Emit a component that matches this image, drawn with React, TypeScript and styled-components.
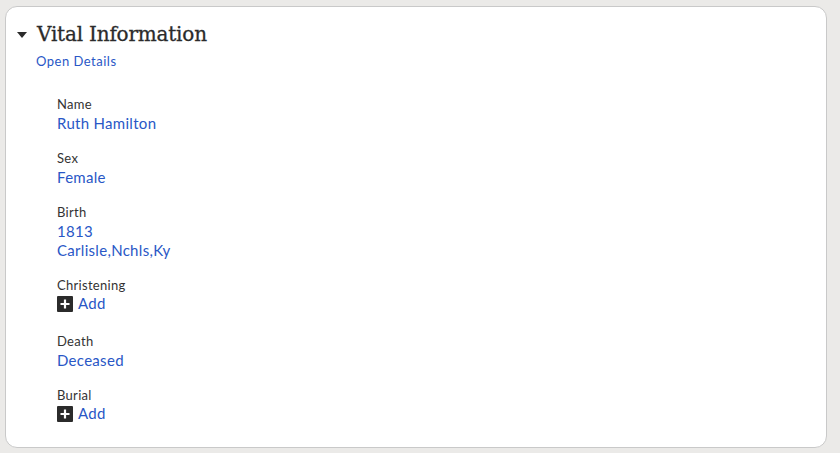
import React from "react";
import styled, { createGlobalStyle } from "styled-components";

const GlobalStyle = createGlobalStyle`
  html, body {
    margin: 0;
    padding: 0;
    background: #ebeae8;
  }
  body {
    font-family: Lato, "Liberation Sans", sans-serif;
  }
`;

type Field = {
  label: string;
  values?: string[];
  add?: boolean;
};

const fields: Field[] = [
  { label: "Name", values: ["Ruth Hamilton"] },
  { label: "Sex", values: ["Female"] },
  { label: "Birth", values: ["1813", "Carlisle,Nchls,Ky"] },
  { label: "Christening", add: true },
  { label: "Death", values: ["Deceased"] },
  { label: "Burial", add: true },
];

function PlusIcon() {
  return (
    <svg width="16" height="16" viewBox="0 0 16 16">
      <rect width="16" height="16" rx="1" fill="#2b2b2b" />
      <path d="M8 3.5v9M3.5 8h9" stroke="#fff" strokeWidth="2.2" />
    </svg>
  );
}

function App() {
  return (
    <Page>
      <GlobalStyle />
      <Card>
        <Header>
          <Caret />
          <Title>Vital Information</Title>
        </Header>
        <DetailsLink href="#">Open Details</DetailsLink>
        <FieldList>
          {fields.map((f) => (
            <FieldGroup key={f.label}>
              <Label>{f.label}</Label>
              {f.values?.map((v) => (
                <Value key={v}>{v}</Value>
              ))}
              {f.add && (
                <AddRow>
                  <PlusIcon />
                  <Value>Add</Value>
                </AddRow>
              )}
            </FieldGroup>
          ))}
        </FieldList>
      </Card>
    </Page>
  );
}

const Page = styled.div`
  padding: 6px 13px 5px 5px;
  height: 453px;
  box-sizing: border-box;
`;

const Card = styled.div`
  background: #fff;
  border: 1px solid #c9c9c9;
  border-radius: 12px;
  height: 100%;
  box-sizing: border-box;
  padding: 13px 0 0 11px;
`;

const Header = styled.div`
  display: flex;
  align-items: center;
  gap: 10px;
`;

const Caret = styled.span`
  width: 0;
  height: 0;
  border-left: 5.5px solid transparent;
  border-right: 5.5px solid transparent;
  border-top: 6px solid #2b2b2b;
  margin-top: 2px;
`;

const Title = styled.h2`
  margin: 0;
  font-family: "DejaVu Serif", "Liberation Serif", serif;
  font-weight: normal;
  font-size: 20px;
  line-height: 28px;
  color: #2b2b2b;
  letter-spacing: -0.2px;
  -webkit-text-stroke: 0.3px #2b2b2b;
`;

const DetailsLink = styled.a`
  display: block;
  margin: 4px 0 0 19px;
  font-size: 13px;
  line-height: 18px;
  letter-spacing: 0.5px;
  color: #2957c6;
  text-decoration: none;
`;

const FieldList = styled.div`
  display: flex;
  flex-direction: column;
  gap: 16px;
  margin: 25px 0 0 40px;
`;

const FieldGroup = styled.div`
  display: flex;
  flex-direction: column;
`;

const Label = styled.div`
  font-size: 13px;
  line-height: 19px;
  letter-spacing: 0.3px;
  color: #333;
`;

const Value = styled.a`
  font-size: 15px;
  line-height: 19px;
  letter-spacing: 0.3px;
  color: #2957c6;
  text-decoration: none;
`;

const AddRow = styled.div`
  display: flex;
  align-items: center;
  gap: 5px;
  height: 21px;
  margin: -2px 0 2px;
`;

export default App;
